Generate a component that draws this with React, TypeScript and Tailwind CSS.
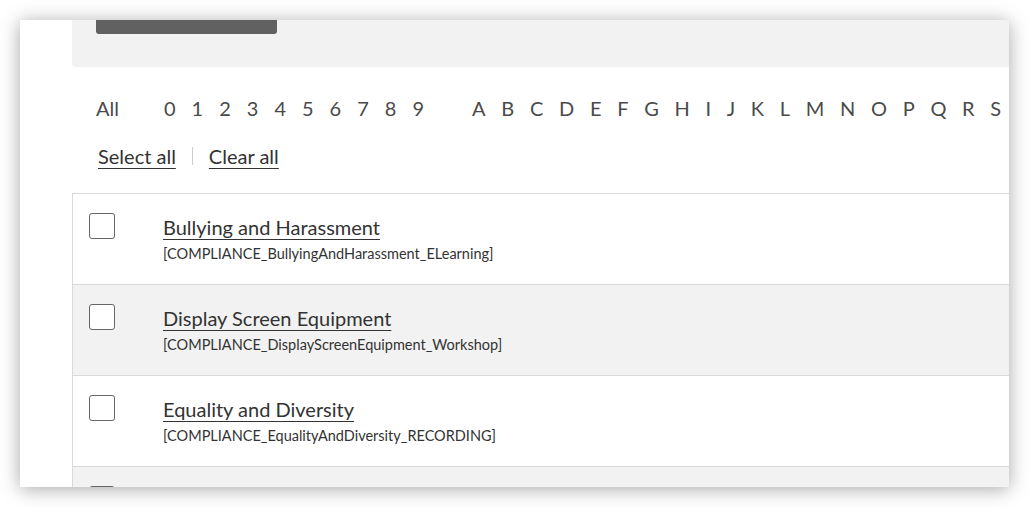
import React from 'react'

const digits = ['0', '1', '2', '3', '4', '5', '6', '7', '8', '9']
const letters = 'ABCDEFGHIJKLMNOPQRS'.split('')

const courses = [
  { title: 'Bullying and Harassment', code: '[COMPLIANCE_BullyingAndHarassment_ELearning]' },
  { title: 'Display Screen Equipment', code: '[COMPLIANCE_DisplayScreenEquipment_Workshop]' },
  { title: 'Equality and Diversity', code: '[COMPLIANCE_EqualityAndDiversity_RECORDING]' },
  { title: '', code: '' } // next row, scrolled below the fold
]

export default function App() {
  return (
    <div className="w-[1030px] h-[508px] bg-white pt-[20px] pl-[20px] font-['Lato',sans-serif] text-[#333]">
      <div className="w-[989px] h-[467px] bg-white overflow-hidden shadow-[0_2px_18px_rgba(0,0,0,0.35)] pl-[52px]">
        {/* filter header, scrolled mostly out of view */}
        <div className="h-[47px] w-[1100px] bg-[#f2f2f2] rounded-bl-[4px] pl-[24px]">
          <div className="w-[181px] h-[14px] bg-[#616161] rounded-b-[3px]" />
        </div>

        <div className="flex items-center whitespace-nowrap pl-[24px] mt-[27px] h-[28px] text-[20px] text-[#4a4a4a] overflow-hidden">
          <span>All</span>
          <div className="flex gap-[16px] ml-[45px]">
            {digits.map(d => (
              <span key={d}>{d}</span>
            ))}
          </div>
          <div className="flex gap-[15.7px] ml-[48px]">
            {letters.map(l => (
              <span key={l}>{l}</span>
            ))}
          </div>
        </div>

        <div className="flex items-center pl-[26px] mt-[20px] h-[28px] text-[20px] text-[#333]">
          <a className="underline underline-offset-[4px] decoration-1">Select all</a>
          <span className="mx-[16px] w-px h-[18px] bg-[#ccc]" />
          <a className="underline underline-offset-[4px] decoration-1">Clear all</a>
        </div>

        <div className="mt-[23px] w-[1100px] border-t border-l border-[#d9d9d9]">
          {courses.map((c, i) => (
            <div
              key={i}
              className={`flex h-[91px] border-b border-[#d9d9d9] pl-[16px] pt-[19px] ${i % 2 === 1 ? 'bg-[#f2f2f2]' : 'bg-white'}`}
            >
              <div className="w-[26px] h-[26px] shrink-0 rounded-[3px] border border-[#666] bg-white" />
              {c.title && (
                <div className="ml-[48px]">
                  <a className="block text-[20px] leading-[28px] underline underline-offset-[4px] decoration-1 text-[#333]">
                    {c.title}
                  </a>
                  <div className="text-[14.5px] leading-[20px] mt-[3px] text-[#333]">{c.code}</div>
                </div>
              )}
            </div>
          ))}
        </div>
      </div>
    </div>
  )
}
